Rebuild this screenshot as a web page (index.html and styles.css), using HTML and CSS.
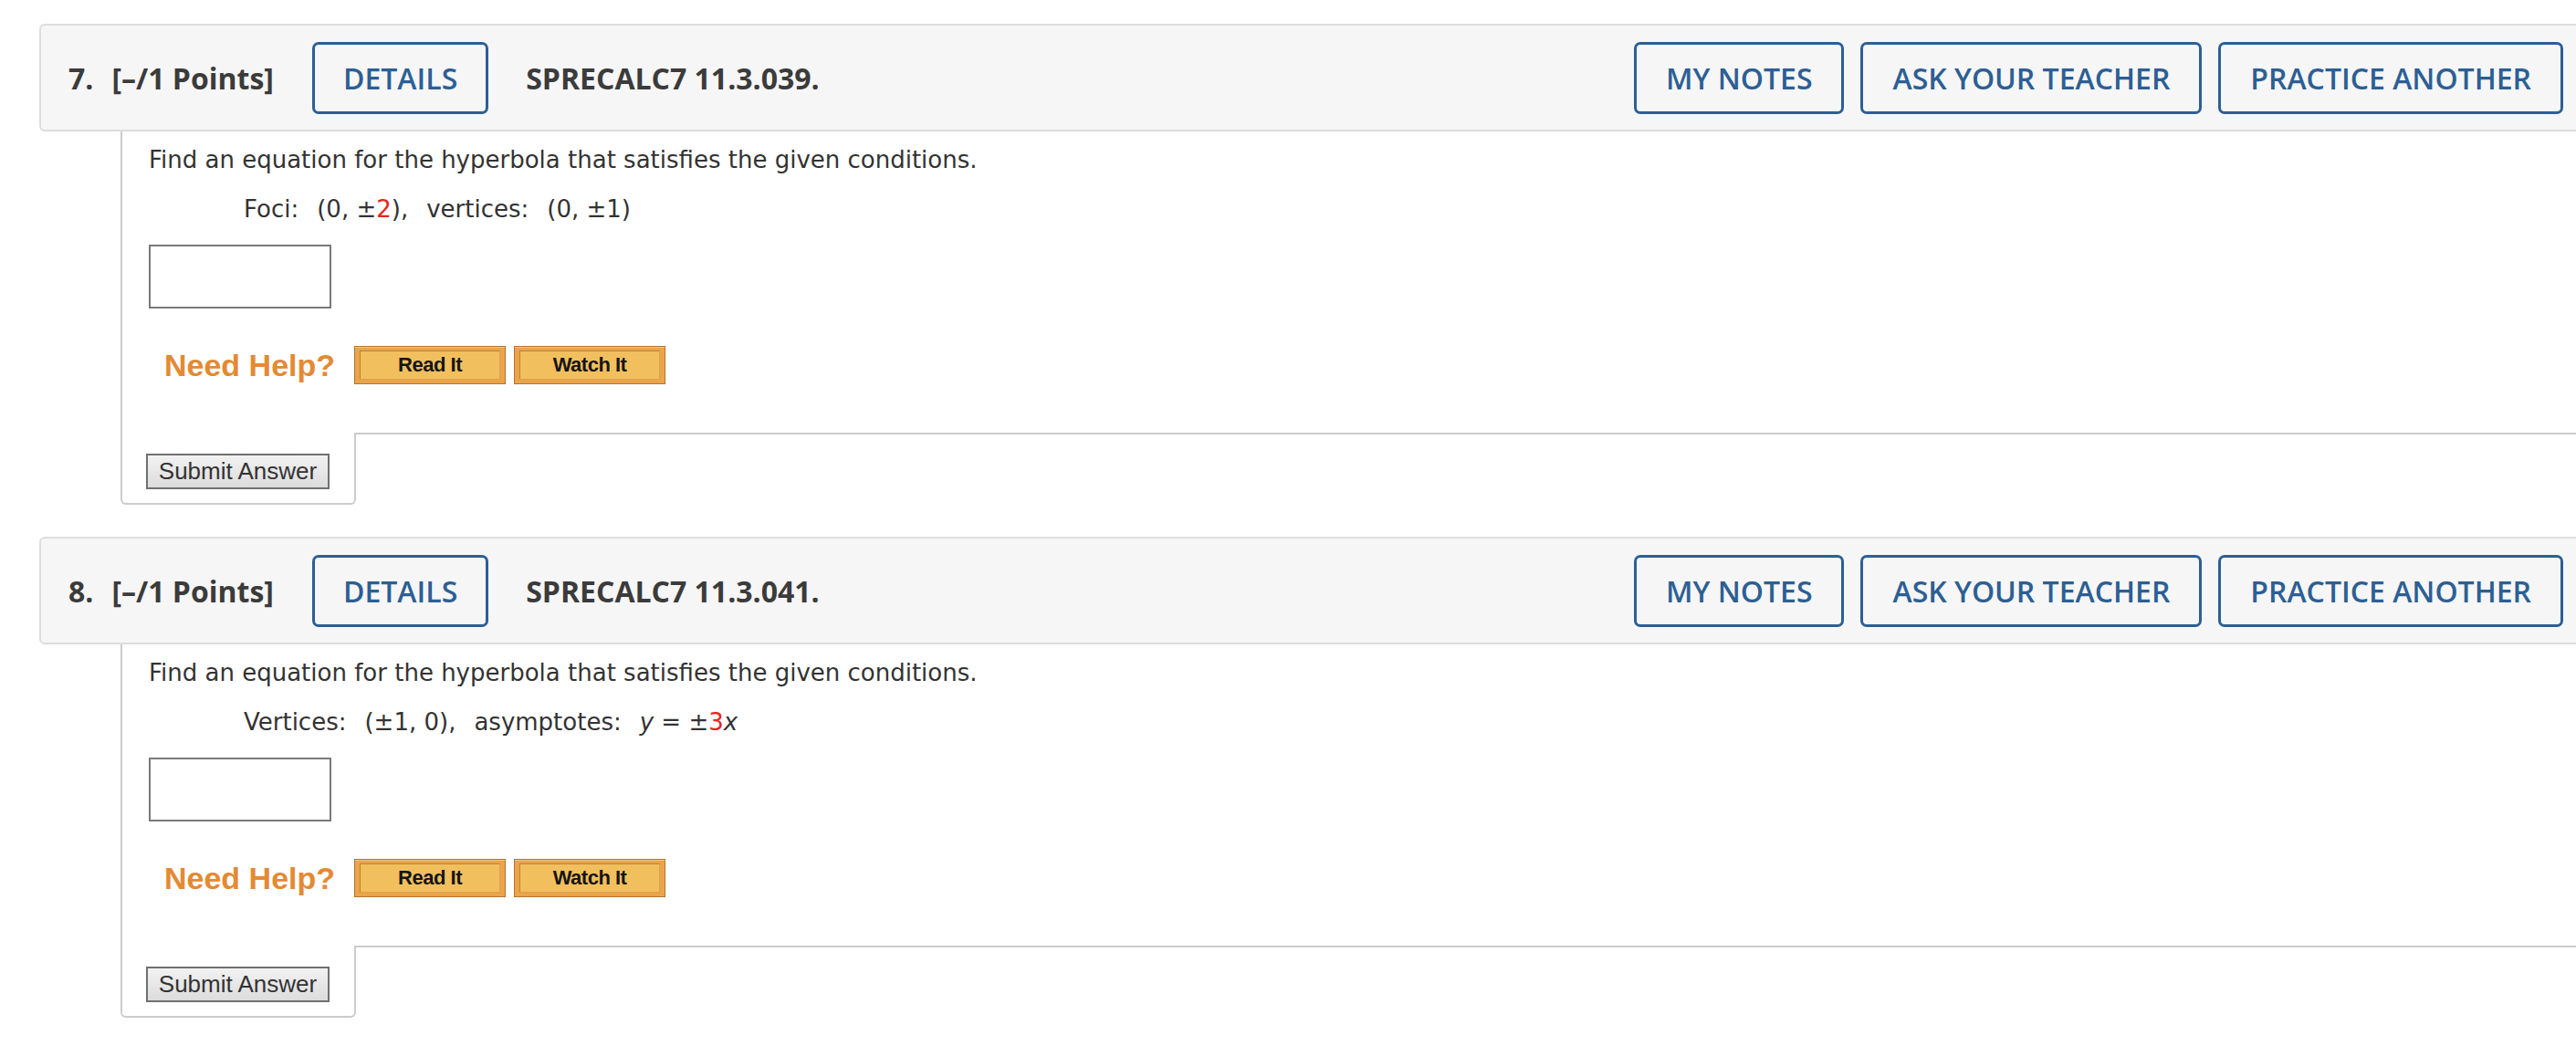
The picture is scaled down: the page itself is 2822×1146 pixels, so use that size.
FILE: index.html
```html
<!DOCTYPE html>
<html lang="en">
<head>
<meta charset="utf-8">
<title>Questions</title>
<link rel="stylesheet" href="styles.css">
</head>
<body>
<div class="page">
  <section class="question">
    <div class="qhead">
      <span class="qnum">7.</span>
      <span class="qpts">[–/1 Points]</span>
      <button class="hbtn details">DETAILS</button>
      <span class="qtitle">SPRECALC7 11.3.039.</span>
      <div class="hactions">
        <button class="hbtn">MY NOTES</button>
        <button class="hbtn">ASK YOUR TEACHER</button>
        <button class="hbtn">PRACTICE ANOTHER</button>
      </div>
    </div>
    <div class="qbody">
      <p class="prompt">Find an equation for the hyperbola that satisfies the given conditions.</p>
      <p class="given"><span>Foci:</span><span class="m">(0, ±<span class="red">2</span>),</span><span class="m">vertices:</span><span class="m">(0, ±1)</span></p>
      <div class="answer"></div>
      <div class="help">
        <span class="needhelp">Need Help?</span>
        <button class="hlp"><span>Read It</span></button>
        <button class="hlp"><span>Watch It</span></button>
      </div>
    </div>
    <div class="submitrow">
      <div class="submitcell"><button class="submit">Submit Answer</button></div>
      <div class="filler"></div>
    </div>
  </section>

  <section class="question">
    <div class="qhead">
      <span class="qnum">8.</span>
      <span class="qpts">[–/1 Points]</span>
      <button class="hbtn details">DETAILS</button>
      <span class="qtitle">SPRECALC7 11.3.041.</span>
      <div class="hactions">
        <button class="hbtn">MY NOTES</button>
        <button class="hbtn">ASK YOUR TEACHER</button>
        <button class="hbtn">PRACTICE ANOTHER</button>
      </div>
    </div>
    <div class="qbody">
      <p class="prompt">Find an equation for the hyperbola that satisfies the given conditions.</p>
      <p class="given"><span>Vertices:</span><span class="m">(±1, 0),</span><span class="m">asymptotes:</span><span class="m"><i>y</i> = ±<span class="red">3</span><i>x</i></span></p>
      <div class="answer"></div>
      <div class="help">
        <span class="needhelp">Need Help?</span>
        <button class="hlp"><span>Read It</span></button>
        <button class="hlp"><span>Watch It</span></button>
      </div>
    </div>
    <div class="submitrow">
      <div class="submitcell"><button class="submit">Submit Answer</button></div>
      <div class="filler"></div>
    </div>
  </section>
</div>
</body>
</html>
```

FILE: styles.css
```css
html, body {
  margin: 0;
  padding: 0;
  background: #fff;
  overflow: hidden;
}

.page {
  padding-top: 26px;
  padding-left: 43px;
  margin-right: -12px;
}

.question {
  margin-bottom: 35px;
}

.qhead {
  display: flex;
  align-items: center;
  background: #f6f6f6;
  border: 2px solid #dddddd;
  border-radius: 6px;
  padding: 18px 24px 17px 30px;
  font-family: "Open Sans", "Liberation Sans", sans-serif;
  color: #3b3b3b;
}

.qnum {
  font-size: 32px;
  font-weight: 700;
  margin-right: 20px;
}

.qpts {
  font-size: 32px;
  font-weight: 700;
  margin-right: 42px;
}

.qtitle {
  font-size: 32px;
  font-weight: 700;
  margin-left: 41px;
}

.hbtn {
  font-family: "Open Sans", "Liberation Sans", sans-serif;
  font-size: 32px;
  font-weight: 600;
  color: #2c5f94;
  background: transparent;
  border: 3px solid #2c5f94;
  border-radius: 7px;
  height: 79px;
  padding: 0 32px;
  margin: 0;
  line-height: 1;
}

.details {
  padding: 0 31px;
}

.hactions {
  margin-left: auto;
  display: flex;
  gap: 18px;
}

.qbody {
  margin-left: 89px;
  border-left: 2px solid #cccccc;
  padding: 15px 0 53px 29px;
  font-family: "DejaVu Sans", Verdana, sans-serif;
  font-size: 26px;
  color: #333333;
}

.prompt {
  margin: 0;
  line-height: 32px;
}

.given {
  margin: 22px 0 0 0;
  padding-left: 104px;
  line-height: 32px;
}

.given .m {
  margin-left: 20px;
}

.red {
  color: #e5251d;
}

.answer {
  margin-top: 23px;
  width: 196px;
  height: 66px;
  border: 2px solid #7a7a7a;
  background: #fff;
}

.help {
  display: flex;
  align-items: center;
  margin-top: 41px;
  padding-left: 17px;
}

.needhelp {
  font-family: "Liberation Sans", Arial, sans-serif;
  font-weight: 700;
  font-size: 34px;
  color: #e48a32;
  margin-right: 21px;
  line-height: 42px;
}

.hlp {
  width: 166px;
  height: 42px;
  margin: 0 9px 0 0;
  padding: 4px 5px 4px 5px;
  border: 1px solid #b27432;
  background: #eca447;
  box-shadow: inset 0 1px 0 #f6c57a;
  display: flex;
  cursor: pointer;
}

.hlp span {
  flex: 1;
  display: flex;
  align-items: center;
  justify-content: center;
  background: #f2bf5e;
  border: 1px solid #b98236;
  border-right-color: #d8a25a;
  border-bottom-color: #d8a25a;
  font-family: "Liberation Sans", Arial, sans-serif;
  font-weight: 700;
  font-size: 22px;
  letter-spacing: -0.5px;
  color: #151515;
}

.submitrow {
  display: flex;
  margin-left: 89px;
}

.submitcell {
  border-left: 2px solid #cccccc;
  border-right: 2px solid #cccccc;
  border-bottom: 2px solid #cccccc;
  border-radius: 0 0 6px 6px;
  padding: 23px 0 15px 26px;
  box-sizing: border-box;
  width: 258px;
}

.filler {
  flex: 1;
  border-top: 2px solid #cccccc;
}

.submit {
  display: block;
  width: 201px;
  height: 39px;
  margin: 0;
  padding: 0;
  border: 2px solid #707070;
  background: linear-gradient(#f2f2f2, #dcdcdc);
  font-family: "Liberation Sans", Arial, sans-serif;
  font-size: 26px;
  color: #333333;
  line-height: 35px;
}
```
